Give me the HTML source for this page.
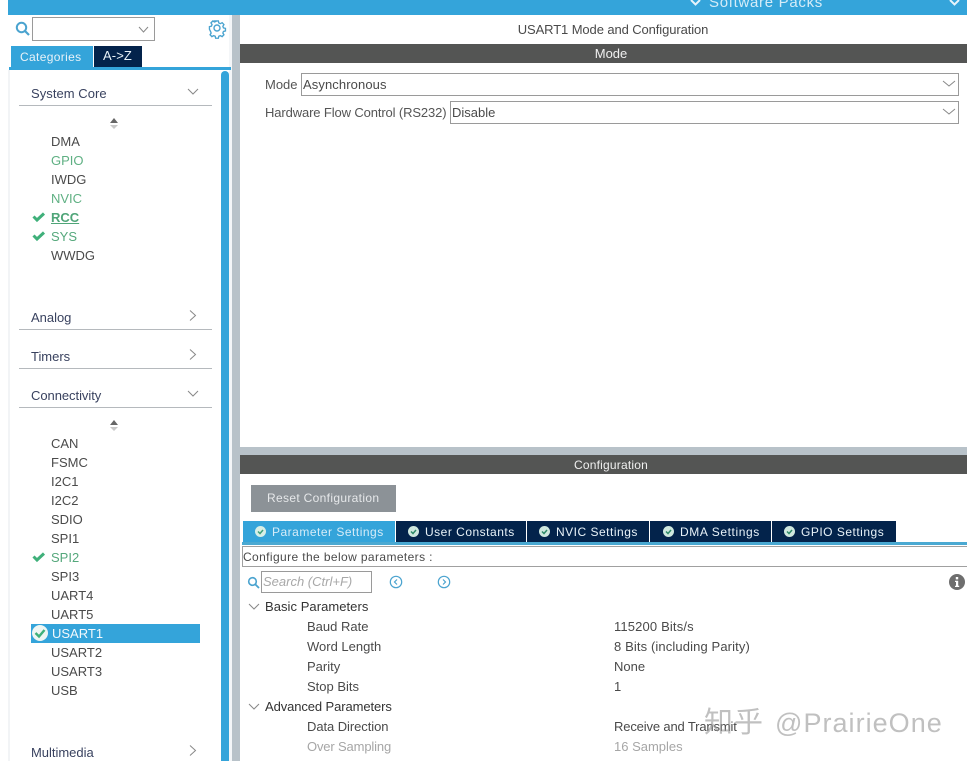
<!DOCTYPE html>
<html><head><meta charset="utf-8">
<style>
html,body{margin:0;padding:0;background:#fff}
#p{position:relative;width:967px;height:761px;overflow:hidden;background:#fff;font-family:"Liberation Sans",sans-serif;font-size:13px;color:#4a4a4a}
#p div,#p span.t,#p svg{position:absolute}
.t{white-space:nowrap;line-height:16px;font-size:13px}
.h{color:#39425f;letter-spacing:-.02px}
.g{color:#5fb083}
.w{color:#e8f2f8;font-size:12px;letter-spacing:.5px}
.c{transform:translateX(-50%)}
.d{background:#b5b9bd;height:1px;left:19px;width:193px}
.b{border:1px solid #9a9a9a;box-sizing:border-box;background:#fff}
.tab{background:#03234b;height:21px;top:521px}
svg{overflow:visible}
</style></head><body><div id="p">

<!-- top bar -->
<div style="left:8px;top:0;width:959px;height:15px;background:#34a4da"></div>
<span class="t" style="left:709px;top:-5px;font-size:15px;color:#d5ecf8;letter-spacing:.7px">Software Packs</span>
<svg style="left:690px;top:0" width="12" height="6"><path d="M1 0 L5.500 4.500 L10 0" fill="none" stroke="#e6f4fb" stroke-width="2"/></svg>
<svg style="left:949px;top:0" width="12" height="6"><path d="M1 0 L5.500 4.500 L10 0" fill="none" stroke="#e6f4fb" stroke-width="2"/></svg>

<!-- sidebar edges -->
<div style="left:8px;top:70px;width:2px;height:691px;background:#f2f4f6"></div>
<div style="left:232px;top:15px;width:8px;height:746px;background:#b8c2c9"></div>
<div style="left:229px;top:15px;width:3px;height:746px;background:#f4f6f8"></div>

<!-- search -->
<svg style="left:15px;top:21px" width="16" height="16"><circle cx="6.500" cy="6.500" r="4.700" fill="none" stroke="#4aa3cf" stroke-width="2"/><path d="M10 10 L14 14" stroke="#4aa3cf" stroke-width="2.200"/></svg>
<div class="b" style="left:32px;top:17px;width:123px;height:24px"></div>
<svg style="left:138px;top:26px" width="12" height="8"><path d="M1 1 L5.500 6 L10 1" fill="none" stroke="#888" stroke-width="1"/></svg>
<svg style="left:208px;top:19px" width="18" height="18" viewBox="0 0 18 18"><circle cx="9" cy="9" r="3" fill="none" stroke="#4aa3cf" stroke-width="1.400"/><path d="M7.500 1.200h3l.5 2.200 1.700.8 2-1.100 2 2.100-1.200 1.900.7 1.800 2.200.5v2.900l-2.200.5-.7 1.800 1.200 1.900-2 2.100-2-1.100-1.700.7-.5 2.200h-3l-.5-2.200-1.700-.7-2 1.100-2-2.100 1.200-1.900-.7-1.800L.6 10.400V7.500l2.200-.5.7-1.800L2.300 3.300l2-2.100 2 1.100 1.700-.8z" transform="translate(.9 .9) scale(.9)" fill="none" stroke="#4aa3cf" stroke-width="1.500"/></svg>

<!-- category tabs -->
<div style="left:11px;top:46px;width:82px;height:21px;background:#34a4da"></div>
<span class="t w" style="left:20px;top:49px;letter-spacing:.35px">Categories</span>
<div style="left:94px;top:46px;width:48px;height:21px;background:#03234b"></div>
<span class="t" style="left:103px;top:48px;color:#e8f2f8;letter-spacing:.1px">A-&gt;Z</span>
<div style="left:9px;top:67px;width:222px;height:3px;background:#34a4da"></div>
<div style="left:221px;top:71px;width:8px;height:690px;background:#34a4da;border-radius:4px 4px 0 0"></div>

<!-- System Core -->
<span class="t h" style="left:31px;top:86px;letter-spacing:.05px">System Core</span>
<svg style="left:187px;top:88px" width="12" height="8"><path d="M1 1 L6 6 L11 1" fill="none" stroke="#888" stroke-width="1"/></svg>
<div class="d" style="top:105px"></div>
<svg style="left:109px;top:117px" width="10" height="12"><path d="M5 1 L9 6 H1Z" fill="#666"/><path d="M1 8 H9 L5 12Z" fill="#c8c8c8"/></svg>

<span class="t" style="left:51px;top:134px">DMA</span>
<span class="t g" style="left:51px;top:153px">GPIO</span>
<span class="t" style="left:51px;top:172px">IWDG</span>
<span class="t g" style="left:51px;top:191px">NVIC</span>
<span class="t" style="left:51px;top:210px;color:#4fa578;font-weight:bold;text-decoration:underline">RCC</span>
<span class="t g" style="left:51px;top:229px;color:#55a87c">SYS</span>
<span class="t" style="left:51px;top:248px">WWDG</span>
<svg style="left:32px;top:212px" width="14" height="10"><path d="M1.500 4.500 L5 8 L12 1.500" fill="none" stroke="#3fb07a" stroke-width="3"/></svg>
<svg style="left:32px;top:231px" width="14" height="10"><path d="M1.500 4.500 L5 8 L12 1.500" fill="none" stroke="#3fb07a" stroke-width="3"/></svg>

<!-- collapsed groups -->
<span class="t h" style="left:31px;top:310px">Analog</span>
<svg style="left:189px;top:310px" width="8" height="12"><path d="M1 0.500 L6.500 5.500 L1 10.500" fill="none" stroke="#888" stroke-width="1"/></svg>
<div class="d" style="top:329px"></div>
<span class="t h" style="left:31px;top:349px">Timers</span>
<svg style="left:189px;top:349px" width="8" height="12"><path d="M1 0.500 L6.500 5.500 L1 10.500" fill="none" stroke="#888" stroke-width="1"/></svg>
<div class="d" style="top:368px"></div>
<span class="t h" style="left:31px;top:388px;letter-spacing:-.05px">Connectivity</span>
<svg style="left:187px;top:390px" width="12" height="8"><path d="M1 1 L6 6 L11 1" fill="none" stroke="#888" stroke-width="1"/></svg>
<div class="d" style="top:407px"></div>
<svg style="left:109px;top:419px" width="10" height="12"><path d="M5 1 L9 6 H1Z" fill="#666"/><path d="M1 8 H9 L5 12Z" fill="#c8c8c8"/></svg>

<span class="t" style="left:51px;top:436px">CAN</span>
<span class="t" style="left:51px;top:455px">FSMC</span>
<span class="t" style="left:51px;top:474px">I2C1</span>
<span class="t" style="left:51px;top:493px">I2C2</span>
<span class="t" style="left:51px;top:512px">SDIO</span>
<span class="t" style="left:51px;top:531px">SPI1</span>
<span class="t g" style="left:51px;top:550px;color:#55a87c">SPI2</span>
<svg style="left:32px;top:552px" width="14" height="10"><path d="M1.500 4.500 L5 8 L12 1.500" fill="none" stroke="#3fb07a" stroke-width="3"/></svg>
<span class="t" style="left:51px;top:569px">SPI3</span>
<span class="t" style="left:51px;top:588px">UART4</span>
<span class="t" style="left:51px;top:607px">UART5</span>
<div style="left:31px;top:624px;width:169px;height:19px;background:#34a4da"></div>
<svg style="left:32px;top:625px" width="16" height="16"><circle cx="8" cy="8" r="8" fill="#eef6f3"/><path d="M3.500 8 L7 11.500 L12.500 5" fill="none" stroke="#3fb07a" stroke-width="2.400"/></svg>
<span class="t" style="left:52px;top:626px;color:#f2f8fc">USART1</span>
<span class="t" style="left:51px;top:645px">USART2</span>
<span class="t" style="left:51px;top:664px">USART3</span>
<span class="t" style="left:51px;top:683px">USB</span>
<span class="t h" style="left:31px;top:745px">Multimedia</span>
<svg style="left:189px;top:745px" width="8" height="12"><path d="M1 0.500 L6.500 5.500 L1 10.500" fill="none" stroke="#888" stroke-width="1"/></svg>

<!-- Mode panel -->
<span class="t c" style="left:613px;top:22px;letter-spacing:-.1px">USART1 Mode and Configuration</span>
<div style="left:240px;top:44px;width:727px;height:19px;background:#545554"></div>
<span class="t c" style="left:611px;top:46px;color:#f0f0f0">Mode</span>
<span class="t" style="left:265px;top:77px;color:#555">Mode</span>
<div class="b" style="left:301px;top:73px;width:658px;height:23px"></div>
<span class="t" style="left:303px;top:77px;letter-spacing:.1px">Asynchronous</span>
<svg style="left:942px;top:80px" width="14" height="8"><path d="M1 1 L7 6 L13 1" fill="none" stroke="#888" stroke-width="1"/></svg>
<span class="t" style="left:265px;top:105px;color:#555;letter-spacing:-.12px">Hardware Flow Control (RS232)</span>
<div class="b" style="left:450px;top:101px;width:509px;height:23px"></div>
<span class="t" style="left:452px;top:105px">Disable</span>
<svg style="left:942px;top:108px" width="14" height="8"><path d="M1 1 L7 6 L13 1" fill="none" stroke="#888" stroke-width="1"/></svg>

<!-- splitter -->
<div style="left:240px;top:447px;width:727px;height:8px;background:#b8c2c9"></div>

<!-- Config panel -->
<div style="left:240px;top:455px;width:727px;height:19px;background:#545554"></div>
<span class="t c" style="left:611px;top:457px;color:#f0f0f0;font-size:12px;letter-spacing:.2px">Configuration</span>
<div style="left:251px;top:485px;width:145px;height:27px;background:#8c9297"></div>
<span class="t" style="left:267px;top:490px;color:#e6e8ea;font-size:12px;letter-spacing:.33px">Reset Configuration</span>

<!-- tabs -->
<div style="left:243px;top:521px;width:152px;height:21px;background:#34a4da"></div>
<div class="tab" style="left:396px;width:130px"></div>
<div class="tab" style="left:527px;width:122px"></div>
<div class="tab" style="left:650px;width:121px"></div>
<div class="tab" style="left:772px;width:124px"></div>
<div style="left:242px;top:542px;width:725px;height:3px;background:#4aa9d2"></div>

<svg style="left:255px;top:526px" width="11" height="11"><circle cx="5.500" cy="5.500" r="5.500" fill="#d8efe6"/><path d="M3 5.500 L5 7.500 L8 4" fill="none" stroke="#3fa07a" stroke-width="1.500"/></svg>
<span class="t w" style="left:272px;top:524px;color:#d6ecf8">Parameter Settings</span>
<svg style="left:408px;top:526px" width="11" height="11"><circle cx="5.500" cy="5.500" r="5.500" fill="#cfe8df"/><path d="M3 5.500 L5 7.500 L8 4" fill="none" stroke="#2d8a68" stroke-width="1.500"/></svg>
<span class="t w" style="left:425px;top:524px">User Constants</span>
<svg style="left:539px;top:526px" width="11" height="11"><circle cx="5.500" cy="5.500" r="5.500" fill="#cfe8df"/><path d="M3 5.500 L5 7.500 L8 4" fill="none" stroke="#2d8a68" stroke-width="1.500"/></svg>
<span class="t w" style="left:556px;top:524px">NVIC Settings</span>
<svg style="left:663px;top:526px" width="11" height="11"><circle cx="5.500" cy="5.500" r="5.500" fill="#cfe8df"/><path d="M3 5.500 L5 7.500 L8 4" fill="none" stroke="#2d8a68" stroke-width="1.500"/></svg>
<span class="t w" style="left:680px;top:524px;letter-spacing:.6px">DMA Settings</span>
<svg style="left:784px;top:526px" width="11" height="11"><circle cx="5.500" cy="5.500" r="5.500" fill="#cfe8df"/><path d="M3 5.500 L5 7.500 L8 4" fill="none" stroke="#2d8a68" stroke-width="1.500"/></svg>
<span class="t w" style="left:801px;top:524px">GPIO Settings</span>

<!-- configure box -->
<div style="left:242px;top:546px;width:725px;height:21px;box-sizing:border-box;border:1px solid #a0a0a0;border-right:none"></div>
<span class="t" style="left:243px;top:549px;font-size:12px;letter-spacing:.39px">Configure the below parameters :</span>

<!-- search row -->
<svg style="left:247px;top:576px" width="13" height="13"><circle cx="5.500" cy="5.500" r="3.800" fill="none" stroke="#4aa3cf" stroke-width="1.600"/><path d="M8.200 8.200 L12 12" stroke="#4aa3cf" stroke-width="1.800"/></svg>
<div class="b" style="left:261px;top:571px;width:111px;height:22px"></div>
<span class="t" style="left:263px;top:574px;color:#a8a8a8;font-style:italic">Search (Ctrl+F)</span>
<svg style="left:389px;top:575px" width="14" height="14"><circle cx="7" cy="7" r="5.700" fill="none" stroke="#4aa3cf" stroke-width="1.200"/><path d="M8 4.500 L5.500 7 L8 9.500" fill="none" stroke="#4aa3cf" stroke-width="1.200"/></svg>
<svg style="left:437px;top:575px" width="14" height="14"><circle cx="7" cy="7" r="5.700" fill="none" stroke="#4aa3cf" stroke-width="1.200"/><path d="M6 4.500 L8.500 7 L6 9.500" fill="none" stroke="#4aa3cf" stroke-width="1.200"/></svg>
<svg style="left:949px;top:574px" width="16" height="16"><circle cx="8" cy="8" r="8" fill="#6e6e6e"/><rect x="6.800" y="3" width="2.400" height="2.400" fill="#fff"/><path d="M6 6.800 H9.200 V11.800 H10.200 V13 H6 V11.800 H7 V8 H6Z" fill="#fff"/></svg>

<!-- tree -->
<svg style="left:248px;top:603px" width="12" height="8"><path d="M1 1 L6 6 L11 1" fill="none" stroke="#888" stroke-width="1"/></svg>
<span class="t" style="left:265px;top:599px;color:#333;letter-spacing:.05px">Basic Parameters</span>
<span class="t" style="left:307px;top:619px">Baud Rate</span>
<span class="t" style="left:614px;top:619px;letter-spacing:.15px">115200 Bits/s</span>
<span class="t" style="left:307px;top:639px">Word Length</span>
<span class="t" style="left:614px;top:639px;letter-spacing:.12px">8 Bits (including Parity)</span>
<span class="t" style="left:307px;top:659px">Parity</span>
<span class="t" style="left:614px;top:659px">None</span>
<span class="t" style="left:307px;top:679px">Stop Bits</span>
<span class="t" style="left:614px;top:679px">1</span>
<svg style="left:248px;top:703px" width="12" height="8"><path d="M1 1 L6 6 L11 1" fill="none" stroke="#888" stroke-width="1"/></svg>
<span class="t" style="left:265px;top:699px;color:#333;letter-spacing:-.1px">Advanced Parameters</span>
<span class="t" style="left:307px;top:719px;letter-spacing:-.07px">Data Direction</span>
<span class="t" style="left:614px;top:719px;letter-spacing:-.15px">Receive and Transmit</span>
<span class="t" style="left:307px;top:739px;color:#a6a6a6;letter-spacing:-.15px">Over Sampling</span>
<span class="t" style="left:614px;top:739px;color:#a6a6a6">16 Samples</span>

<!-- watermark -->
<span class="t" style="left:704px;top:706px;line-height:34px;font-size:29px;letter-spacing:1px;color:rgba(150,150,150,.6);font-family:'Liberation Sans','Noto Sans CJK SC',sans-serif">知乎</span>
<span class="t" style="left:775px;top:706px;line-height:34px;font-size:27px;letter-spacing:1.03px;color:rgba(150,150,150,.6)">@PrairieOne</span>

</div></body></html>
